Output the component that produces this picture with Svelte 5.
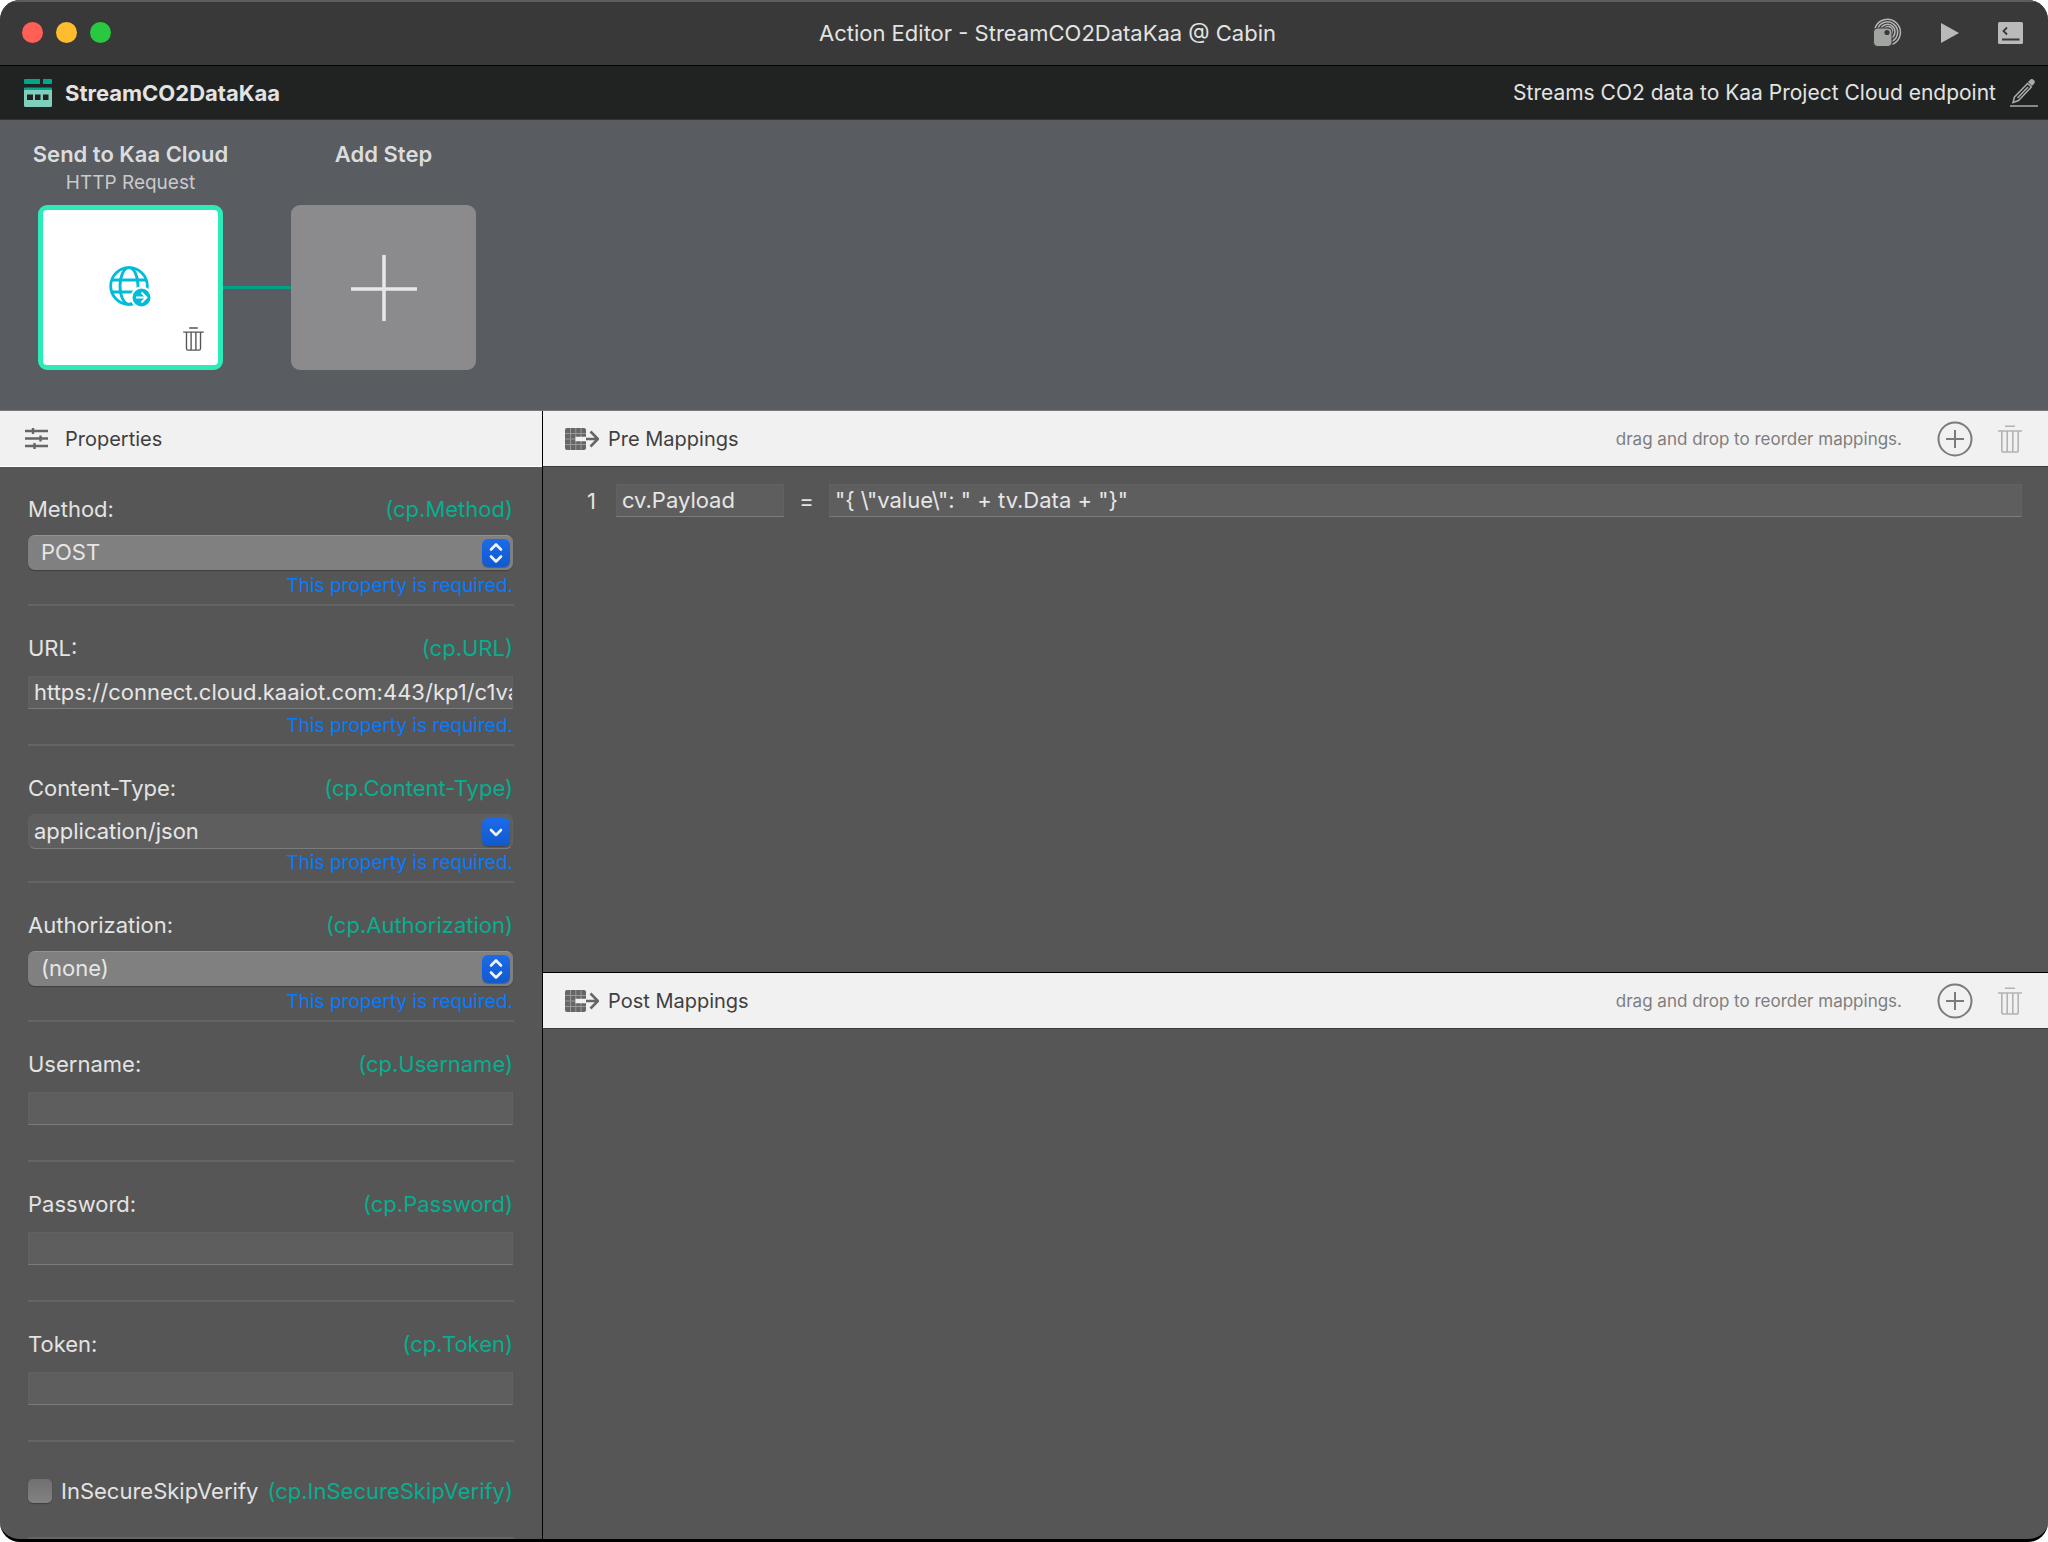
<script>
    const fields = $state([
        { id: "Method", type: "select", value: "POST", options: ["POST", "GET", "PUT", "DELETE"], required: true },
        { id: "URL", type: "text", value: "https://connect.cloud.kaaiot.com:443/kp1/c1va", required: true },
        { id: "Content-Type", type: "combo", value: "application/json", required: true },
        { id: "Authorization", type: "select", value: "(none)", options: ["(none)", "Basic", "Bearer"], required: true },
        { id: "Username", type: "text", value: "" },
        { id: "Password", type: "password", value: "" },
        { id: "Token", type: "text", value: "" },
    ]);

    let skipVerify = $state(false);

    const sections = $state([
        {
            title: "Pre Mappings",
            rows: [{ target: "cv.Payload", source: '"{ \\"value\\": " + tv.Data + "}"' }],
        },
        { title: "Post Mappings", rows: [] },
    ]);
</script>

{#snippet trash()}
    <svg class="trash" viewBox="0 0 24 28" fill="none" stroke="currentColor" stroke-width="1.6">
        <path d="M7 1.2h10M0 6h24M3.8 6v19.2q0 1.8 1.8 1.8h12.8q1.8 0 1.8-1.8V6M9.2 6v21M14.8 6v21" />
    </svg>
{/snippet}

<div class="window">
    <header class="titlebar">
        <div class="lights">
            <button class="light red" aria-label="Close"></button>
            <button class="light yellow" aria-label="Minimize"></button>
            <button class="light green" aria-label="Zoom"></button>
        </div>
        <h1>Action Editor - StreamCO2DataKaa @ Cabin</h1>
        <div class="tools">
            <button aria-label="Trace">
                <svg width="29" height="29" viewBox="0 0 29 29">
                    <g fill="none" stroke="#b4b5b4" stroke-width="1.5">
                        <path d="M2 10.500A13 13 0 1 1 19.500 26.300" />
                        <path d="M4.700 11A10.200 10.200 0 1 1 19 23.200" />
                        <path d="M7.500 11.500A7.400 7.400 0 1 1 18.500 20" />
                        <path d="M10.500 12A4.600 4.600 0 1 1 17.500 17" />
                    </g>
                    <rect x=".5" y="10" width="18.500" height="18.500" rx="4" fill="#a2a4a2" stroke="#383938" stroke-width="1" />
                    <circle cx="14" cy="14.500" r="2.600" fill="#383938" />
                </svg>
            </button>
            <button aria-label="Run">
                <svg width="18" height="22" viewBox="0 0 18 22"><path d="M0 1 18 11 0 21z" fill="#b9bab9" /></svg>
            </button>
            <button aria-label="Console">
                <svg width="25" height="22" viewBox="0 0 25 22">
                    <rect width="25" height="22" rx="1.500" fill="#b9bab9" />
                    <path d="M9 5.500 5.500 9 9 12.500M4 17.500h17.500" fill="none" stroke="#383938" stroke-width="1.800" />
                </svg>
            </button>
        </div>
    </header>

    <div class="action">
        <svg width="28" height="28" viewBox="0 0 28 28">
            <path fill="#00a88a" d="M1 0h15v5H1q-1 0-1-1V1q0-1 1-1zM19 0h8q1 0 1 1v3q0 1-1 1h-8zM1 8.500h26q1 0 1 1V12H0V9.500q0-1 1-1z" />
            <path fill="#7fcfbb" d="M0 11h28v15.500q0 1.500-1.500 1.500h-25Q0 28 0 26.500z" />
            <path fill="#212322" d="M3 15.500h6v5.500H3zM11 15.500h5.500v5.500H11zM19 15.500h5.500v5.500H19z" />
        </svg>
        <h2>StreamCO2DataKaa</h2>
        <p>Streams CO2 data to Kaa Project Cloud endpoint</p>
        <button aria-label="Edit description">
            <svg width="28" height="28" viewBox="0 0 28 28" fill="none" stroke="#a9aaa9" stroke-width="1.500">
                <path d="M0 27h28M3 23.500 4.500 18 17.500 4.500l3.800 3.500L8.500 21.500zM7.500 19 18 8" />
                <path d="m19 3 2-2q1-.6 1.900.2l.8.800q.8 1 0 1.900l-1.800 2z" fill="#a9aaa9" />
            </svg>
        </button>
    </div>

    <section class="steps">
        <div class="step">
            <strong>Send to Kaa Cloud</strong>
            <span>HTTP Request</span>
            <div class="card selected">
                <svg width="44" height="44" viewBox="0 0 44 44" fill="none" stroke="#00bcd8" stroke-width="2.800">
                    <circle cx="20" cy="20" r="18.300" />
                    <ellipse cx="20" cy="20" rx="9" ry="18.300" />
                    <path d="M3 14h34M3 26h34" />
                    <circle cx="32.500" cy="31.500" r="10" fill="#00bcd8" stroke="#fff" stroke-width="2" />
                    <path d="M27 31.500h10M32.500 26.500l5 5-5 5" stroke="#fff" stroke-width="1.800" />
                </svg>
                <button class="remove" aria-label="Delete step">{@render trash()}</button>
            </div>
        </div>
        <div class="connector"></div>
        <div class="step">
            <strong>Add Step</strong>
            <span></span>
            <button class="card add" aria-label="Add step">
                <svg width="66" height="66" viewBox="0 0 66 66" stroke="#e8e8e8" stroke-width="3.500">
                    <path d="M33 0v66M0 34h66" />
                </svg>
            </button>
        </div>
    </section>

    <main>
        <aside>
            <div class="bar">
                <svg width="23" height="22" viewBox="0 0 23 22" stroke="#666" stroke-width="2.400">
                    <path d="M0 3h23M0 10.500h23M0 18h23M8 0v6M15.500 7.500v6M9.500 15v6" />
                </svg>
                <h3>Properties</h3>
            </div>

            {#each fields as field}
                <div class="field {field.type}">
                    <div class="caption">
                        <label for={field.id}>{field.id}:</label>
                        <span class="ref">(cp.{field.id})</span>
                    </div>
                    <div class="control">
                        {#if field.type === "select"}
                            <select id={field.id} bind:value={field.value}>
                                {#each field.options as option}
                                    <option>{option}</option>
                                {/each}
                            </select>
                            <svg class="knob" viewBox="0 0 28 28">
                                <path d="m9 10.500 5-5 5 5M9 17.500l5 5 5-5" />
                            </svg>
                        {:else}
                            <input id={field.id} type={field.type === "password" ? "password" : "text"} bind:value={field.value} />
                            {#if field.type === "combo"}
                                <button class="knob" aria-label="Show options">
                                    <svg width="28" height="28" viewBox="0 0 28 28"><path d="m9 12 5 5 5-5" /></svg>
                                </button>
                            {/if}
                        {/if}
                    </div>
                    <p class="note">{field.required ? "This property is required." : ""}</p>
                </div>
            {/each}

            <div class="check">
                <input id="skip" type="checkbox" bind:checked={skipVerify} />
                <label for="skip">InSecureSkipVerify</label>
                <span class="ref">(cp.InSecureSkipVerify)</span>
            </div>
        </aside>

        <div class="mappings">
            {#each sections as section}
                <section>
                    <div class="bar">
                        <svg width="35" height="24" viewBox="0 0 35 24">
                            <rect x="1" y="1" width="21" height="22" rx="2" fill="#666" />
                            <path d="M6.500 1v22M11.800 1v22M17 1v22M1 6.500h21M1 12h21M1 17.500h21" stroke="#999" stroke-width="1" />
                            <path d="M11.500 12h12" stroke="#f1f1f1" stroke-width="4.500" />
                            <path d="M22 12h11M26.500 4.500 34 12l-7.500 7.500" fill="none" stroke="#666" stroke-width="2.600" />
                        </svg>
                        <h3>{section.title}</h3>
                        <p>drag and drop to reorder mappings.</p>
                        <button class="plus" aria-label="Add mapping">
                            <svg width="36" height="36" viewBox="0 0 36 36" fill="none" stroke="#7b7b7b" stroke-width="2">
                                <circle cx="18" cy="18" r="16.500" />
                                <path d="M18 9v18M9 18h18" />
                            </svg>
                        </button>
                        <button class="delete" aria-label="Delete mapping">{@render trash()}</button>
                    </div>
                    {#each section.rows as row, i}
                        <div class="row">
                            <span class="num">{i + 1}</span>
                            <input class="target" aria-label="Target" bind:value={row.target} />
                            <span class="eq">=</span>
                            <input class="source" aria-label="Source" bind:value={row.source} />
                        </div>
                    {/each}
                </section>
            {/each}
        </div>
    </main>
</div>

<style>
    :global(body) {
        background: #fff;
    }

    .window {
        display: flex;
        flex-direction: column;
        min-height: 100vh;
        box-sizing: border-box;
        border-bottom: 3px solid #000;
        border-radius: 20px;
        overflow: hidden;
        background: #565656;
        color: #e3e3e3;
        font: 22px/28px Inter, "Liberation Sans", sans-serif;
    }

    h1, h2, h3, p {
        margin: 0;
        font-size: inherit;
        font-weight: 400;
        white-space: nowrap;
    }

    button {
        display: flex;
        padding: 0;
        border: 0;
        background: none;
        color: inherit;
    }

    input, select {
        box-sizing: border-box;
        width: 100%;
        margin: 0;
        color: #e6e6e6;
        font: inherit;
        outline: none;
    }

    .titlebar {
        display: grid;
        grid-template-columns: 1fr auto 1fr;
        align-items: center;
        height: 66px;
        box-sizing: border-box;
        padding: 0 25px 2px 22px;
        border-top: 2px solid #5c5e5d;
        border-bottom: 1px solid #000;
        background: #383938;
    }

    .titlebar h1 {
        margin-left: 50px;
    }

    .lights {
        display: flex;
        gap: 13px;
    }

    .light {
        width: 21px;
        height: 21px;
        border-radius: 50%;
    }

    .red { background: #ff5f57; }
    .yellow { background: #febc2e; }
    .green { background: #28c840; }

    .tools {
        display: flex;
        align-items: center;
        justify-content: flex-end;
        gap: 39px;
    }

    .action {
        display: flex;
        align-items: center;
        height: 54px;
        box-sizing: border-box;
        padding: 0 10px 0 24px;
        border-bottom: 1px solid #343635;
        background: #212322;
    }

    .action h2 {
        flex: 1;
        margin-left: 13px;
        font-weight: 700;
    }

    .action p {
        font-size: 21px;
    }

    .action button {
        margin-left: 14px;
    }

    .steps {
        display: flex;
        height: 291px;
        box-sizing: border-box;
        padding: 20px 38px 0;
        border-bottom: 1px solid #77797c;
        background: #595c61;
    }

    .step {
        display: flex;
        flex-direction: column;
        align-items: center;
        width: 185px;
        white-space: nowrap;
    }

    .step strong {
        font-weight: 600;
        color: #dcdcdd;
    }

    .step span {
        height: 28px;
        margin: 1px 0 8px;
        color: #c9cacb;
        font-size: 19px;
    }

    .card {
        position: relative;
        display: flex;
        align-items: center;
        justify-content: center;
        width: 185px;
        height: 165px;
        box-sizing: border-box;
        border-radius: 9px;
    }

    .selected {
        border: 5px solid #2debb9;
        background: #fff;
    }

    .add {
        background: #8b8b8d;
    }

    .remove {
        position: absolute;
        right: 14px;
        bottom: 14px;
        color: #555;
    }

    .remove .trash {
        width: 21px;
        height: 24px;
    }

    .connector {
        width: 68px;
        height: 3px;
        margin-top: 146px;
        background: #00a385;
    }

    .trash {
        width: 24px;
        height: 28px;
    }

    main {
        flex: 1;
        display: grid;
        grid-template-columns: 543px 1fr;
    }

    aside {
        border-right: 1px solid #000;
    }

    .bar {
        display: flex;
        align-items: center;
        height: 56px;
        box-sizing: border-box;
        background: #f1f1f1;
        color: #3f3f3f;
        border-bottom: 1px solid #3c3c3c;
    }

    .bar h3 {
        font-size: 20px;
    }

    aside .bar {
        gap: 17px;
        padding-left: 25px;
        border-bottom: 1px solid #fff;
    }

    .field, .check {
        margin: 0 28px;
        border-bottom: 2px solid #646464;
    }

    .field {
        padding: 28px 0 6px;
    }

    .caption {
        display: flex;
        justify-content: space-between;
        margin-bottom: 14px;
    }

    .select .caption, .combo .caption {
        margin-bottom: 12px;
    }

    .caption, .note, .control, .check {
        padding-right: 1px;
    }

    .ref {
        color: #07ae8f;
    }

    .control {
        position: relative;
        display: flex;
    }

    .control input, .row input {
        height: 33px;
        padding: 0 0 2px 5px;
        border: 1px solid #626262;
        border-bottom: 1px solid #7c7c7c;
        border-radius: 0;
        background: #5e5e5e;
    }

    .control .knob {
        position: absolute;
        top: 4px;
        right: 4px;
        width: 28px;
        height: 28px;
        border-radius: 6px;
        background: linear-gradient(#1c6bea, #1259cd);
        box-shadow: 0 1px 1px #0004;
        pointer-events: none;
    }

    .knob path {
        fill: none;
        stroke: #f0f4fc;
        stroke-width: 2.6;
        stroke-linecap: round;
        stroke-linejoin: round;
    }

    .combo .control input {
        height: 35px;
        border-radius: 7px;
    }

    select {
        height: 35px;
        padding: 0 13px 3px;
        border: 0;
        border-top: 1px solid #929292;
        border-radius: 7px;
        background: #808080;
        box-shadow: 0 1px 1px #0004;
        appearance: none;
    }

    .note {
        height: 24px;
        margin-top: 5px;
        color: #067aff;
        font-size: 19px;
        line-height: 24px;
        text-align: right;
    }

    .select .note {
        margin-top: 4px;
    }

    .combo .note {
        margin-top: 2px;
    }

    .check {
        display: flex;
        align-items: center;
        padding-top: 35px;
        padding-bottom: 32px;
    }

    .check input {
        width: 24px;
        height: 24px;
        border-radius: 5px;
        background: linear-gradient(#707070, #828282);
        box-shadow: 0 1px 1px #0004;
        appearance: none;
    }

    .check input:checked {
        background: #1c6bea;
    }

    .check label {
        margin: 0 auto 0 9px;
    }

    .mappings {
        display: grid;
        grid-template-rows: 99fr 100fr;
    }

    .mappings section + section {
        border-top: 1px solid #000;
    }

    .mappings .bar {
        padding: 0 26px 0 21px;
    }

    .mappings h3 {
        flex: 1;
        margin-left: 9px;
    }

    .bar p {
        color: #7e7e7e;
        font-size: 17px;
    }

    .plus {
        margin: 0 25px 0 35px;
    }

    .delete {
        color: #b3b3b3;
    }

    .row {
        display: flex;
        align-items: center;
        padding: 17px 26px 0 44px;
    }

    .row .target {
        width: 168px;
        margin-left: 20px;
    }

    .eq {
        width: 45px;
        text-align: center;
    }

    .row .source {
        flex: 1;
    }
</style>
